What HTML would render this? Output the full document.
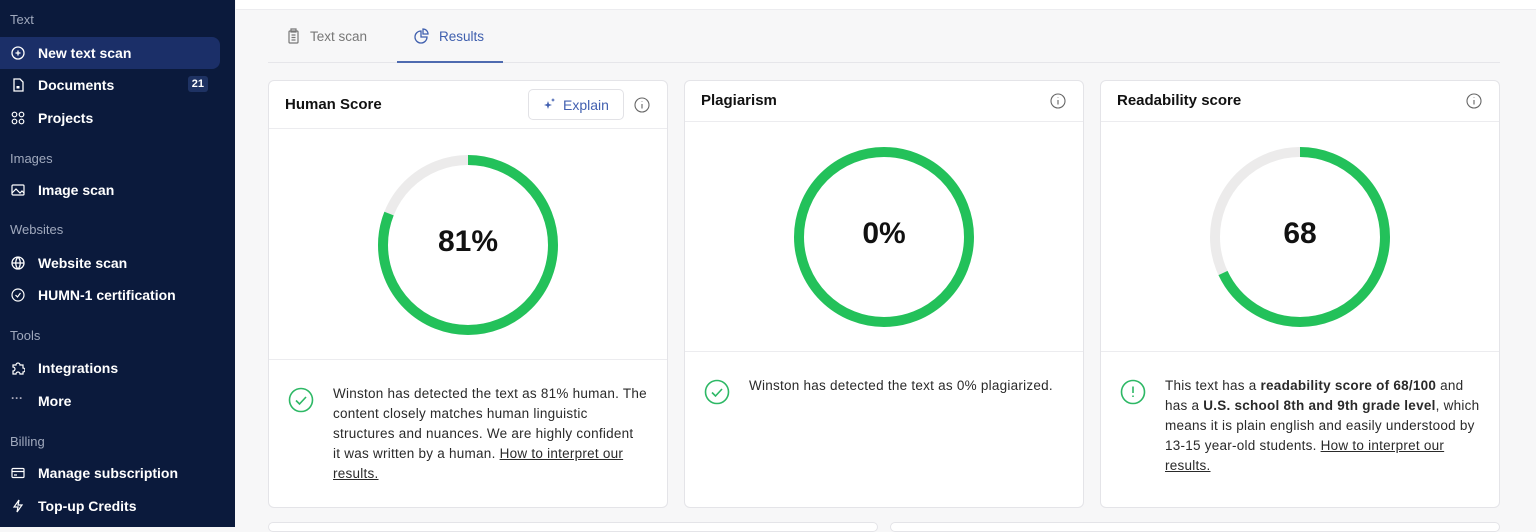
<!DOCTYPE html>
<html><head><meta charset="utf-8"><style>
*{box-sizing:border-box;margin:0;padding:0}
body{width:1536px;height:527px;overflow:hidden;background:#f7f7f8;font-family:"Liberation Sans",sans-serif;position:relative}
.sb{position:absolute;left:0;top:0;width:235px;height:527px;background:#0b1a3c;color:#fff}
.sec{position:absolute;left:10px;font-size:13px;color:#a0a9bd}
.it{position:absolute;left:0;width:220px;height:32px;font-size:14px;font-weight:bold;color:#fff;display:flex;align-items:center;padding-left:38px}
.it svg{position:absolute;left:11px;top:9px}
.act{background:#1b2f68;border-radius:0 8px 8px 0}
.badge{position:absolute;right:12px;top:7px;background:#1e3263;border-radius:3px;font-size:11px;padding:2px 4px}
.top{position:absolute;left:236px;top:0;right:0;height:10px;background:#fff;border-bottom:1px solid #ececef}
.tabs{position:absolute;left:268px;top:62px;width:1232px;height:1px;background:#e6e6ea}
.tab{position:absolute;top:28px;font-size:13.5px;display:flex;align-items:center;gap:9px}
.card{position:absolute;top:80px;width:400px;height:428px;background:#fff;border:1px solid #e4e4e8;border-radius:6px}
.h{position:absolute;left:16px;font-size:15px;font-weight:bold;color:#111}
.line{position:absolute;left:0;right:0;height:1px;background:#ececef}
.txt{position:absolute;left:64px;font-size:13.5px;letter-spacing:0.25px;line-height:20px;color:#2a2a2a;white-space:nowrap}
.txt u{text-decoration:underline}
.ic{position:absolute;left:19px;width:26px;height:26px}
.info{position:absolute;right:17px;width:16px;height:16px}
.num{position:absolute;width:100%;text-align:center;font-size:30px;font-weight:bold;color:#111}
</style></head><body>
<div class="sb">
<div class="sec" style="top:12px">Text</div>
<div class="it act" style="top:37px"><svg width="14" height="14" viewBox="0 0 14 14"><circle cx="7" cy="7" r="6" fill="none" stroke="#fff" stroke-width="1.3"/><path d="M7 4.5v5M4.5 7h5" stroke="#fff" stroke-width="1.3"/></svg>New text scan</div>
<div class="it" style="top:69px"><svg width="14" height="14" viewBox="0 0 14 14"><path d="M3 1h6l3 3v9H3z" fill="none" stroke="#fff" stroke-width="1.3"/><rect x="5.5" y="8" width="3" height="2.5" fill="#fff"/></svg>Documents<span class="badge">21</span></div>
<div class="it" style="top:102px"><svg width="14" height="14" viewBox="0 0 14 14" fill="none" stroke="#fff" stroke-width="1.2"><circle cx="3.5" cy="3.5" r="2.3"/><circle cx="10.5" cy="3.5" r="2.3"/><circle cx="3.5" cy="10.5" r="2.3"/><circle cx="10.5" cy="10.5" r="2.3"/></svg>Projects</div>
<div class="sec" style="top:151px">Images</div>
<div class="it" style="top:174px"><svg width="14" height="14" viewBox="0 0 14 14" fill="none" stroke="#fff" stroke-width="1.2"><rect x="1" y="2" width="12" height="10" rx="1"/><path d="M1 10l4-4 4 4 2-2 2 2"/></svg>Image scan</div>
<div class="sec" style="top:222px">Websites</div>
<div class="it" style="top:247px"><svg width="14" height="14" viewBox="0 0 14 14" fill="none" stroke="#fff" stroke-width="1.3"><circle cx="7" cy="7" r="6"/><path d="M1 7h12M7 1c-3 3-3 9 0 12M7 1c3 3 3 9 0 12"/></svg>Website scan</div>
<div class="it" style="top:279px"><svg width="14" height="14" viewBox="0 0 14 14" fill="none" stroke="#fff" stroke-width="1.2"><circle cx="7" cy="7" r="6"/><path d="M4.5 7l2 2 3-4"/></svg>HUMN-1 certification</div>
<div class="sec" style="top:328px">Tools</div>
<div class="it" style="top:352px"><svg width="14" height="14" viewBox="0 0 14 14" fill="none" stroke="#fff" stroke-width="1.2"><path d="M2 4h3a2 2 0 014 0h3v3a2 2 0 010 4v2H9a2 2 0 00-4 0H2v-3a2 2 0 000-4z"/></svg>Integrations</div>
<div class="it" style="top:385px"><span style="position:absolute;left:11px;top:6px;font-size:12px;color:#aab">···</span>More</div>
<div class="sec" style="top:434px">Billing</div>
<div class="it" style="top:457px"><svg width="14" height="14" viewBox="0 0 14 14" fill="none" stroke="#fff" stroke-width="1.2"><rect x="1" y="2.5" width="12" height="9" rx="1"/><path d="M1 5.5h12M3 9h3"/></svg>Manage subscription</div>
<div class="it" style="top:490px"><svg width="14" height="14" viewBox="0 0 14 14" fill="none" stroke="#fff" stroke-width="1.2"><path d="M8 1L3 8h4l-1 5 5-7H7z"/></svg>Top-up Credits</div>
</div>
<div class="top"></div>
<div class="tab" style="left:286px;color:#777"><svg width="15" height="16" viewBox="0 0 15 16" fill="none" stroke="#777" stroke-width="1.2"><rect x="3" y="3" width="9" height="12" rx="1"/><path d="M5 1h5v3H5zM5.5 7h4M5.5 9.5h4M5.5 12h4"/></svg>Text scan</div>
<div class="tab" style="left:414px;color:#3f5fae"><svg width="16" height="16" viewBox="0 0 16 16" fill="none" stroke="#3f5fae" stroke-width="1.3"><path d="M7 3a6 6 0 106 6H7z"/><path d="M9 1v5h5a5 5 0 00-5-5z"/></svg>Results</div>
<div class="tabs"></div>
<div style="position:absolute;left:397px;top:61px;width:106px;height:2px;background:#4f6bb0"></div>

<div class="card" style="left:268px">
<div class="h" style="top:15px">Human Score</div>
<div style="position:absolute;left:259px;top:8px;width:96px;height:31px;border:1px solid #e2e2e6;border-radius:5px;color:#4260b0;font-size:14px;display:flex;align-items:center;justify-content:center;gap:7px"><svg width="13" height="13" viewBox="0 0 13 13" fill="#4260b0"><path d="M5 3l1 3 3 1-3 1-1 3-1-3-3-1 3-1zM10 0l.6 1.4L12 2l-1.4.6L10 4l-.6-1.4L8 2l1.4-.6z"/></svg>Explain</div>
<svg class="info" style="top:16px" viewBox="0 0 16 16" fill="none" stroke="#666" stroke-width="1.1"><circle cx="8" cy="8" r="7"/><path d="M8 7v4.5M8 4.5v.5"/></svg>
<div class="line" style="top:47px"></div>
<svg style="position:absolute;left:108px;top:73px" width="182" height="182" viewBox="0 0 182 182"><circle cx="91" cy="91" r="85" fill="none" stroke="#ecebeb" stroke-width="10"/><circle cx="91" cy="91" r="85" fill="none" stroke="#23c15a" stroke-width="10" stroke-dasharray="432.6 600" transform="rotate(-90 91 91)"/></svg>
<div class="num" style="top:144px">81%</div>
<div class="line" style="top:278px"></div>
<svg class="ic" style="top:306px" viewBox="0 0 26 26" fill="none" stroke="#2db865" stroke-width="1.6"><circle cx="13" cy="13" r="11.5"/><path d="M8 13.5l3.5 3.5L18 10"/></svg>
<div class="txt" style="top:303px">Winston has detected the text as 81% human. The<br>content closely matches human linguistic<br>structures and nuances. We are highly confident<br>it was written by a human. <u>How to interpret our</u><br><u>results.</u></div>
</div>

<div class="card" style="left:684px">
<div class="h" style="top:11px">Plagiarism</div>
<svg class="info" style="top:12px" viewBox="0 0 16 16" fill="none" stroke="#666" stroke-width="1.1"><circle cx="8" cy="8" r="7"/><path d="M8 7v4.5M8 4.5v.5"/></svg>
<div class="line" style="top:40px"></div>
<svg style="position:absolute;left:108px;top:65px" width="182" height="182" viewBox="0 0 182 182"><circle cx="91" cy="91" r="85" fill="none" stroke="#23c15a" stroke-width="10"/></svg>
<div class="num" style="top:136px">0%</div>
<div class="line" style="top:270px"></div>
<svg class="ic" style="top:298px" viewBox="0 0 26 26" fill="none" stroke="#2db865" stroke-width="1.6"><circle cx="13" cy="13" r="11.5"/><path d="M8 13.5l3.5 3.5L18 10"/></svg>
<div class="txt" style="top:295px">Winston has detected the text as 0% plagiarized.</div>
</div>

<div class="card" style="left:1100px">
<div class="h" style="top:11px">Readability score</div>
<svg class="info" style="top:12px" viewBox="0 0 16 16" fill="none" stroke="#666" stroke-width="1.1"><circle cx="8" cy="8" r="7"/><path d="M8 7v4.5M8 4.5v.5"/></svg>
<div class="line" style="top:40px"></div>
<svg style="position:absolute;left:108px;top:65px" width="182" height="182" viewBox="0 0 182 182"><circle cx="91" cy="91" r="85" fill="none" stroke="#ecebeb" stroke-width="10"/><circle cx="91" cy="91" r="85" fill="none" stroke="#23c15a" stroke-width="10" stroke-dasharray="363.2 600" transform="rotate(-90 91 91)"/></svg>
<div class="num" style="top:136px">68</div>
<div class="line" style="top:270px"></div>
<svg class="ic" style="top:298px" viewBox="0 0 26 26" fill="none" stroke="#2db865" stroke-width="1.6"><circle cx="13" cy="13" r="11.5"/><path d="M13 7.5v6.5M13 16.5v1.5"/></svg>
<div class="txt" style="top:295px">This text has a <b>readability score of 68/100</b> and<br>has a <b>U.S. school 8th and 9th grade level</b>, which<br>means it is plain english and easily understood by<br>13-15 year-old students. <u>How to interpret our</u><br><u>results.</u></div>
</div>
<div style="position:absolute;left:268px;top:522px;width:610px;height:10px;border:1px solid #e4e4e8;background:#fff;border-radius:6px"></div>
<div style="position:absolute;left:890px;top:522px;width:610px;height:10px;border:1px solid #e4e4e8;background:#fff;border-radius:6px"></div>
</body></html>
